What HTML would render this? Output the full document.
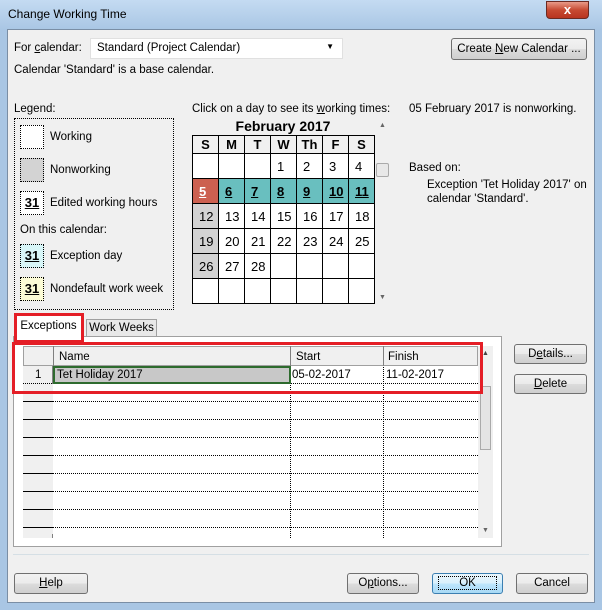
<!DOCTYPE html>
<html><head><style>
*{box-sizing:border-box;margin:0;padding:0}
body{width:602px;height:610px;background:#a9c6e4;font-family:"Liberation Sans",sans-serif;font-size:11.5px;color:#000;position:relative;overflow:hidden}
.a{position:absolute}
.btn{position:absolute;border:1px solid #707070;border-radius:3px;background:linear-gradient(#f2f2f2,#ebebeb 50%,#dcdcdc 51%,#cfcfcf);text-align:center;line-height:18px;font-size:11.5px}
.cal td{border:1px solid #000;width:26px;height:25px;text-align:left;padding-left:6px;font-size:13px;vertical-align:middle}
.cal th{border:1px solid #000;height:18px;font-size:13px;font-weight:bold;background:#f0f0f0}
.cal{border-collapse:collapse;position:absolute;left:192px;top:135px;background:#fff}
.ex{background:repeating-conic-gradient(#2a9a9a 0 25%,#a8e4e4 0 50%) 0 0/2px 2px;font-weight:bold;text-decoration:underline}
.nw{background:#d3d3d3}
.lg{position:absolute;left:20px;width:24px;height:24px;border:1px dotted #000;text-align:center;font-weight:bold;text-decoration:underline;font-size:13px;line-height:22px}
.lt{position:absolute;left:50px}
.row{position:absolute;left:23px;width:455px;height:18px;border-bottom:1px dotted #000}
</style></head><body>
<div class="a" style="left:0;top:0;width:602px;height:30px;background:linear-gradient(#c4dbf2,#a9c6e4)"></div>
<div class="a" style="left:8px;top:7px;font-size:12px">Change Working Time</div>
<div class="a" style="left:546px;top:1px;width:43px;height:18px;border:1px solid #6b2a22;border-radius:0 0 4px 4px;background:linear-gradient(#e89a88,#c74a32 50%,#b83420);color:#fff;font-weight:bold;text-align:center;line-height:16px;font-size:13px">x</div>
<div class="a" style="left:7px;top:29px;width:588px;height:574px;background:#f0f0f0;border:1px solid #7a8ea5"></div>

<div class="a" style="left:14px;top:42px">For <u>c</u>alendar:</div>
<div class="a" style="left:90px;top:38px;width:253px;height:21px;background:#fff;border:1px solid #e0e0e0;padding:3px 6px">Standard (Project Calendar)<span style="position:absolute;right:8px;top:3px;font-size:8px">▼</span></div>
<div class="btn" style="left:451px;top:38px;width:136px;height:22px;line-height:20px">Create <u>N</u>ew Calendar ...</div>
<div class="a" style="left:14px;top:64px">Calendar 'Standard' is a base calendar.</div>

<div class="a" style="left:14px;top:103px">Legend:</div>
<div class="a" style="left:14px;top:118px;width:160px;height:192px;border:1px dotted #000"></div>
<div class="lg" style="top:125px;background:#fff"></div><div class="lt" style="top:131px">Working</div>
<div class="lg" style="top:158px;background:#d3d3d3"></div><div class="lt" style="top:164px">Nonworking</div>
<div class="lg" style="top:191px;background:#fff">31</div><div class="lt" style="top:197px">Edited working hours</div>
<div class="a" style="left:20px;top:224px">On this calendar:</div>
<div class="lg" style="top:244px;background:#d8f6f8">31</div><div class="lt" style="top:250px">Exception day</div>
<div class="lg" style="top:277px;background:#fbfbd6">31</div><div class="lt" style="top:283px">Nondefault work week</div>

<div class="a" style="left:192px;top:103px">Click on a day to see its <u>w</u>orking times:</div>
<div class="a" style="left:192px;top:118px;width:182px;text-align:center;font-weight:bold;font-size:14px">February 2017</div>
<table class="cal">
<tr><th>S</th><th>M</th><th>T</th><th>W</th><th>Th</th><th>F</th><th>S</th></tr>
<tr><td></td><td></td><td></td><td>1</td><td>2</td><td>3</td><td>4</td></tr>
<tr><td class="ex" style="background:repeating-conic-gradient(#b03020 0 25%,#e89080 0 50%) 0 0/2px 2px;color:#fff">5</td><td class="ex">6</td><td class="ex">7</td><td class="ex">8</td><td class="ex">9</td><td class="ex">10</td><td class="ex">11</td></tr>
<tr><td class="nw">12</td><td>13</td><td>14</td><td>15</td><td>16</td><td>17</td><td>18</td></tr>
<tr><td class="nw">19</td><td>20</td><td>21</td><td>22</td><td>23</td><td>24</td><td>25</td></tr>
<tr><td class="nw">26</td><td>27</td><td>28</td><td></td><td></td><td></td><td></td></tr>
<tr><td></td><td></td><td></td><td></td><td></td><td></td><td></td></tr>
</table>
<div class="a" style="left:375px;top:120px;width:15px;height:183px;background:#f0f0f0"><div style="position:absolute;top:2px;left:4px;font-size:7px;color:#666">▲</div><div style="position:absolute;top:43px;left:1px;width:13px;height:14px;border:1px solid #aaa;border-radius:2px;background:#e8e8e8"></div><div style="position:absolute;bottom:2px;left:4px;font-size:7px;color:#666">▼</div></div>

<div class="a" style="left:409px;top:103px">05 February 2017 is nonworking.</div>
<div class="a" style="left:409px;top:162px">Based on:</div>
<div class="a" style="left:427px;top:178px;line-height:14px">Exception 'Tet Holiday 2017' on<br>calendar 'Standard'.</div>

<div class="a" style="left:13px;top:336px;width:489px;height:211px;border:1px solid #a0a0a0;background:#fff"></div>
<div class="a" style="left:86px;top:319px;width:71px;height:18px;border:1px solid #a0a0a0;background:#e8e8e8;text-align:center;line-height:16px">Work Weeks</div>
<div class="a" style="left:15px;top:315px;width:67px;height:22px;background:#fff;border:1px solid #a0a0a0;border-bottom:none;text-align:center;line-height:20px">Exceptions</div>
<div class="a" style="left:23px;top:346px;width:470px;height:192px;background:#fff"></div>
<div class="a" style="left:23px;top:346px;width:30px;height:192px;background:#f0f0f0;border-right:1px solid #808080"></div>
<div class="a" style="left:23px;top:346px;width:455px;height:20px;background:#f0f0f0;border:1px solid #a0a0a0"></div>
<div class="a" style="left:290px;top:346px;height:192px;border-left:1px dotted #000"></div>
<div class="a" style="left:383px;top:346px;height:192px;border-left:1px dotted #000"></div>
<div class="a" style="left:290px;top:346px;height:20px;border-left:1px solid #808080"></div>
<div class="a" style="left:383px;top:346px;height:20px;border-left:1px solid #808080"></div>
<div class="a" style="left:53px;top:346px;height:20px;border-left:1px solid #808080"></div>
<div class="a" style="left:59px;top:351px">Name</div>
<div class="a" style="left:296px;top:351px">Start</div>
<div class="a" style="left:388px;top:351px">Finish</div>
<div class="row" style="top:366px"></div><div class="row" style="top:384px"></div><div class="row" style="top:402px"></div><div class="row" style="top:420px"></div><div class="row" style="top:438px"></div><div class="row" style="top:456px"></div><div class="row" style="top:474px"></div><div class="row" style="top:492px"></div><div class="row" style="top:510px"></div>
<div class="a" style="left:23px;top:384px;width:30px;height:150px;background:repeating-linear-gradient(#f0f0f0 0 17px,#000 17px 18px)"></div>
<div class="a" style="left:35px;top:369px">1</div>
<div class="a" style="left:53px;top:366px;width:238px;height:18px;border:2px solid #2e6b2e;background:#c8c8c8;padding:1px 2px">Tet Holiday 2017</div>
<div class="a" style="left:292px;top:369px">05-02-2017</div>
<div class="a" style="left:386px;top:369px">11-02-2017</div>
<div class="a" style="left:478px;top:346px;width:15px;height:192px;background:#f0f0f0"><div style="position:absolute;top:40px;left:2px;width:11px;height:64px;border:1px solid #aaa;background:#e4e4e4"></div><div style="position:absolute;top:4px;left:4px;font-size:7px;color:#444">▲</div><div style="position:absolute;bottom:4px;left:4px;font-size:7px;color:#666">▼</div></div>

<div class="a" style="left:14px;top:313px;width:70px;height:30px;border:3px solid #e41e26"></div>
<div class="a" style="left:12px;top:342px;width:471px;height:52px;border:3px solid #e41e26"></div>

<div class="btn" style="left:514px;top:344px;width:73px;height:20px">D<u>e</u>tails...</div>
<div class="btn" style="left:514px;top:374px;width:73px;height:20px"><u>D</u>elete</div>

<div class="a" style="left:13px;top:554px;width:576px;border-top:1px solid #d5dfe5"></div>
<div class="btn" style="left:14px;top:573px;width:74px;height:21px"><u>H</u>elp</div>
<div class="btn" style="left:347px;top:573px;width:72px;height:21px">O<u>p</u>tions...</div>
<div class="btn" style="left:432px;top:573px;width:71px;height:21px;border-color:#3c7fb1;background:linear-gradient(#eaf6fd,#d9f0fc 50%,#bee6fd 51%,#a7d9f5)"><span style="border:1px dotted #000;padding:0 20px">OK</span></div>
<div class="btn" style="left:516px;top:573px;width:72px;height:21px">Cancel</div>
</body></html>
